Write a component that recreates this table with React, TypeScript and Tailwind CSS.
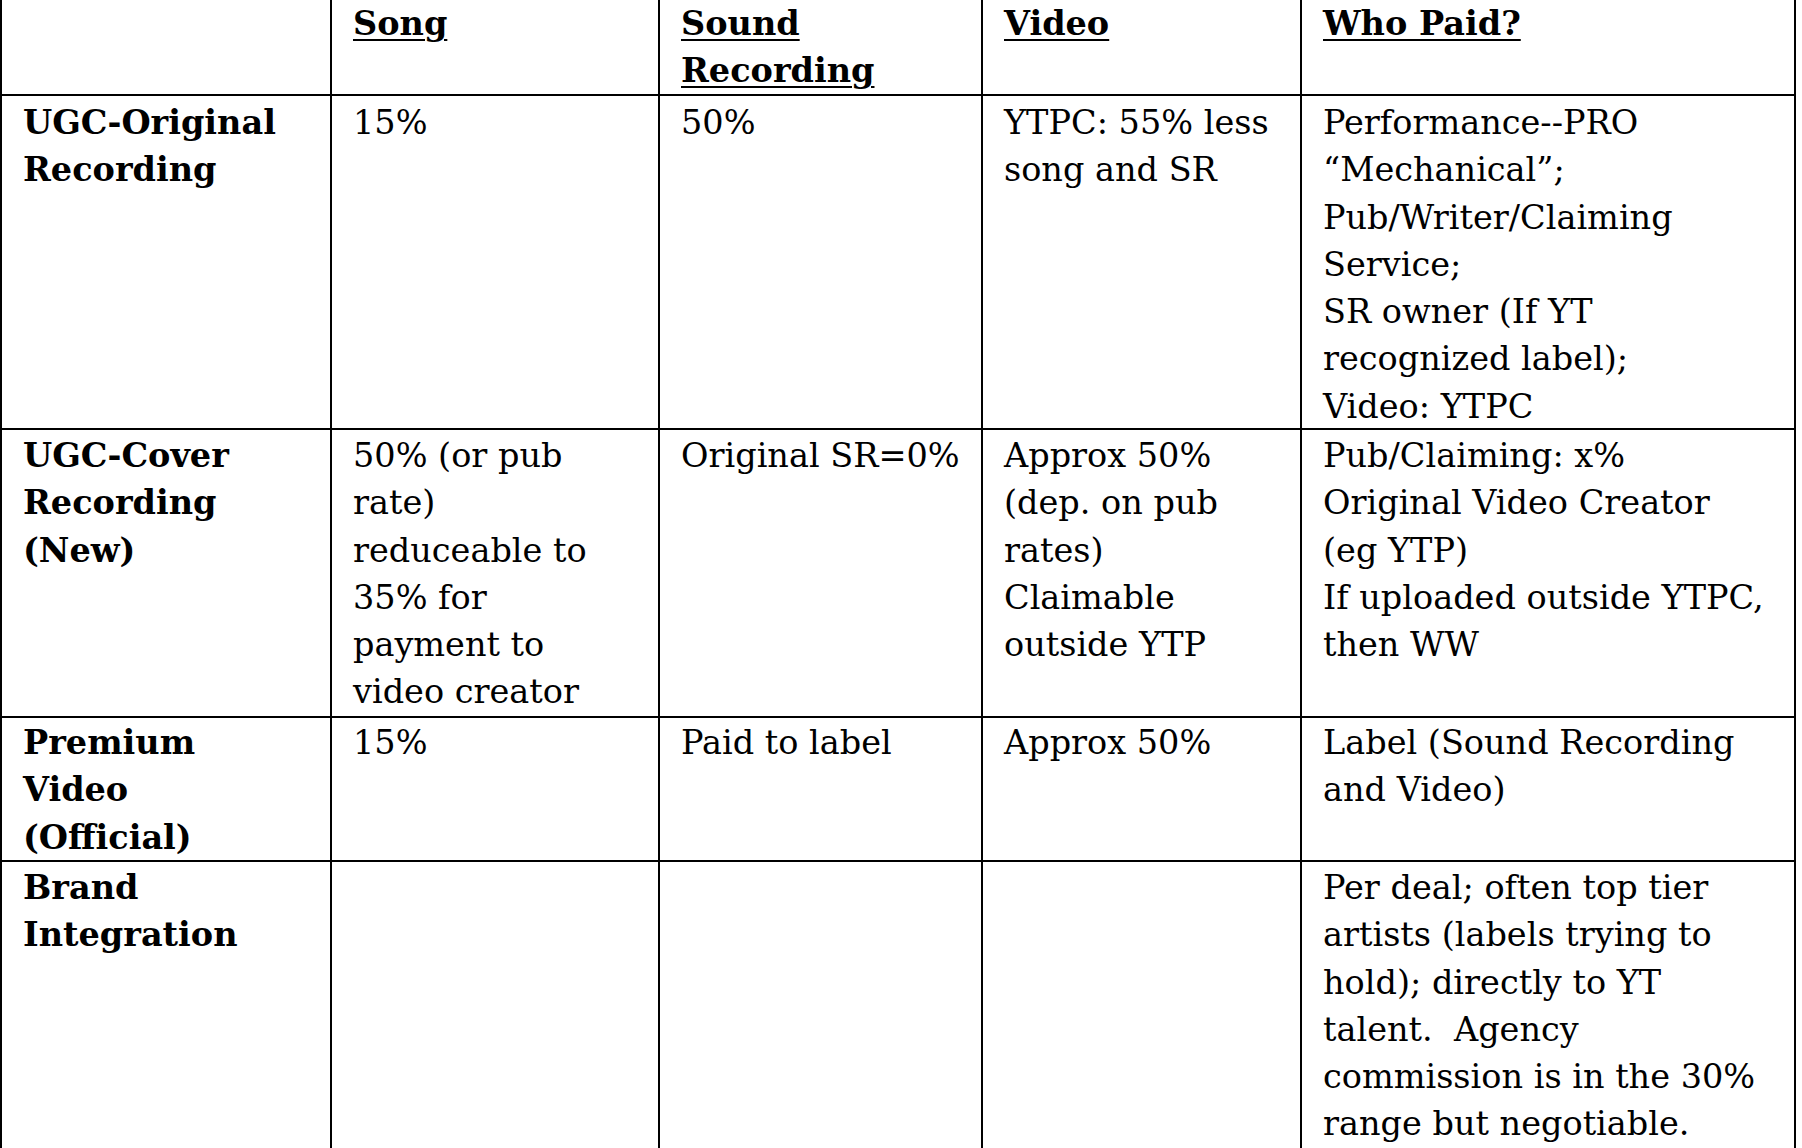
const header = ['', 'Song', 'Sound\nRecording', 'Video', 'Who Paid?'];

const rows: { pad: string; cells: string[] }[] = [
  {
    pad: 'pt-[3px]',
    cells: [
      'UGC-Original\nRecording',
      '15%',
      '50%',
      'YTPC: 55% less\nsong and SR',
      'Performance--PRO\n“Mechanical”;\nPub/Writer/Claiming\nService;\nSR owner (If YT\nrecognized label);\nVideo: YTPC',
    ],
  },
  {
    pad: 'pt-[2px]',
    cells: [
      'UGC-Cover\nRecording\n(New)',
      '50% (or pub\nrate)\nreduceable to\n35% for\npayment to\nvideo creator',
      'Original SR=0%',
      'Approx 50%\n(dep. on pub\nrates)\nClaimable\noutside YTP',
      'Pub/Claiming: x%\nOriginal Video Creator\n(eg YTP)\nIf uploaded outside YTPC,\nthen WW',
    ],
  },
  {
    pad: 'pt-[1px]',
    cells: ['Premium\nVideo\n(Official)', '15%', 'Paid to label', 'Approx 50%', 'Label (Sound Recording\nand Video)'],
  },
  {
    pad: 'pt-[2px]',
    cells: [
      'Brand\nIntegration',
      '',
      '',
      '',
      'Per deal; often top tier\nartists (labels trying to\nhold); directly to YT\ntalent.  Agency\ncommission is in the 30%\nrange but negotiable.',
    ],
  },
];

function Cell({ text, first, bold, pad }: { text: string; first: boolean; bold?: boolean; pad: string }) {
  return (
    <div
      className={`border-r-2 border-b-2 border-black pl-[21px] ${pad} ${first ? 'border-l-2' : ''} ${
        bold ? 'font-bold' : ''
      } whitespace-pre overflow-visible`}
    >
      {text}
    </div>
  );
}

export default function App() {
  return (
    <div className="h-[1148px] w-full overflow-hidden bg-white text-black">
      <div
        className="grid w-[1796px] grid-cols-[332px_328px_323px_319px_494px] grid-rows-[96px_334px_288px_144px_320px] text-[33.5px] leading-[47.3px]"
        style={{ fontFamily: '"DejaVu Serif", "Liberation Serif", serif' }}
      >
        {header.map((h, i) => (
          <div
            key={i}
            className={`border-r-2 border-b-2 border-black pl-[21px] pt-0 font-bold whitespace-pre ${
              i === 0 ? 'border-l-2' : ''
            }`}
          >
            {h
              ? h.split('\n').map((line, j) => (
                  <div key={j}>
                    <span className="underline decoration-[1.5px] underline-offset-[4px]">{line}</span>
                  </div>
                ))
              : null}
          </div>
        ))}
        {rows.map((r, ri) =>
          r.cells.map((c, ci) => (
            <Cell key={`${ri}-${ci}`} text={c} first={ci === 0} bold={ci === 0} pad={r.pad} />
          ))
        )}
      </div>
    </div>
  );
}
